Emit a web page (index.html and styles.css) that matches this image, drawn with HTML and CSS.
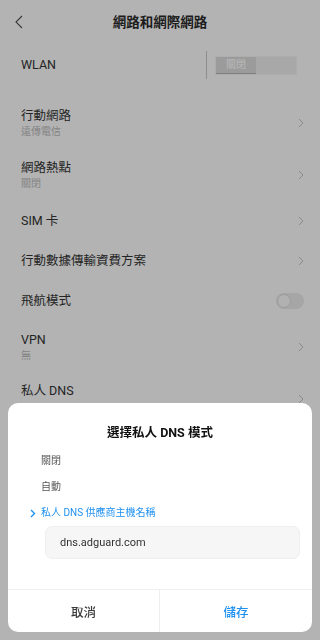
FILE: index.html
```html
<!DOCTYPE html>
<html lang="zh-Hant">
<head>
<meta charset="utf-8">
<title>網路和網際網路</title>
<link rel="stylesheet" href="styles.css">
</head>
<body>
<div class="page">
  <header class="topbar">
    <span class="back">
      <svg width="8" height="14" viewBox="0 0 8 14"><polyline points="7,1 1,7 7,13" fill="none" stroke="#3a3a3a" stroke-width="1.1"/></svg>
    </span>
    <h1 class="title">網路和網際網路</h1>
    <span></span>
  </header>

  <div class="wlan-row">
    <span class="label">WLAN</span>
    <div class="wlan-ctrl">
      <span class="vline"></span>
      <div class="seg-box"><span class="seg-on">關閉</span></div>
    </div>
  </div>

  <ul class="list">
    <li class="row tall">
      <div class="text"><span class="label">行動網路</span><span class="sub">遠傳電信</span></div>
      <svg class="chev" width="6" height="10" viewBox="0 0 6 10"><polyline points="1,1 5,5 1,9" fill="none" stroke="#8a8a8a" stroke-width="1"/></svg>
    </li>
    <li class="row tall">
      <div class="text"><span class="label">網路熱點</span><span class="sub">關閉</span></div>
      <svg class="chev" width="6" height="10" viewBox="0 0 6 10"><polyline points="1,1 5,5 1,9" fill="none" stroke="#8a8a8a" stroke-width="1"/></svg>
    </li>
    <li class="row">
      <div class="text"><span class="label">SIM 卡</span></div>
      <svg class="chev" width="6" height="10" viewBox="0 0 6 10"><polyline points="1,1 5,5 1,9" fill="none" stroke="#8a8a8a" stroke-width="1"/></svg>
    </li>
    <li class="row">
      <div class="text"><span class="label">行動數據傳輸資費方案</span></div>
      <svg class="chev" width="6" height="10" viewBox="0 0 6 10"><polyline points="1,1 5,5 1,9" fill="none" stroke="#8a8a8a" stroke-width="1"/></svg>
    </li>
    <li class="row">
      <div class="text"><span class="label">飛航模式</span></div>
      <span class="switch"><span class="knob"></span></span>
    </li>
    <li class="row tall">
      <div class="text"><span class="label">VPN</span><span class="sub">無</span></div>
      <svg class="chev" width="6" height="10" viewBox="0 0 6 10"><polyline points="1,1 5,5 1,9" fill="none" stroke="#8a8a8a" stroke-width="1"/></svg>
    </li>
    <li class="row tall top">
      <div class="text"><span class="label">私人 DNS</span></div>
      <svg class="chev" width="6" height="10" viewBox="0 0 6 10"><polyline points="1,1 5,5 1,9" fill="none" stroke="#8a8a8a" stroke-width="1"/></svg>
    </li>
  </ul>
</div>

<div class="dialog">
  <h2 class="d-title">選擇私人 DNS 模式</h2>
  <ul class="options">
    <li class="opt">關閉</li>
    <li class="opt">自動</li>
    <li class="opt selected">
      <svg class="opt-chev" width="6" height="9" viewBox="0 0 6 9"><polyline points="1,1 4.5,4.5 1,8" fill="none" stroke="#1e90f0" stroke-width="1.4"/></svg>
      私人 DNS 供應商主機名稱
    </li>
  </ul>
  <div class="input">dns.adguard.com</div>
  <div class="buttons">
    <span class="btn cancel">取消</span>
    <span class="btn save">儲存</span>
  </div>
</div>
</body>
</html>
```

FILE: styles.css
```css
* { box-sizing: border-box; }
html, body { margin: 0; padding: 0; }
body {
  width: 320px;
  height: 640px;
  overflow: hidden;
  background: #b3b3b3;
  font-family: Roboto, "Noto Sans CJK TC", sans-serif;
  color: #242424;
}
.page { width: 320px; }

.topbar {
  height: 44px;
  display: grid;
  grid-template-columns: 44px 1fr 44px;
  align-items: center;
}
.back { padding-left: 15px; display: flex; align-items: center; height: 14px; }
.title {
  margin: 0;
  text-align: center;
  font-size: 13.5px;
  font-weight: 600;
  color: #1c1c1c;
  line-height: 20px;
}

.wlan-row {
  height: 42px;
  padding: 0 23px 0 21px;
  display: flex;
  align-items: center;
  justify-content: space-between;
}
.label { font-size: 12.5px; line-height: 18px; color: #242424; }
.wlan-ctrl { display: flex; align-items: center; gap: 8px; }
.vline { width: 1.5px; height: 28px; background: #8e8e8e; }
.seg-box {
  width: 82px;
  height: 19px;
  background: #a8a8a8;
  border: 1px solid #adadad;
  display: flex;
}
.seg-on {
  width: 40px;
  height: 100%;
  background: #9b9b9b;
  border-bottom: 1px solid #7f7f7f;
  color: #bababa;
  font-size: 10px;
  line-height: 16px;
  text-align: center;
}

.list { list-style: none; margin: 11px 0 0; padding: 0; }
.row {
  height: 40px;
  padding: 0 16px 0 21px;
  display: flex;
  align-items: center;
  justify-content: space-between;
}
.row.tall { height: 52px; }
.row.top .text { align-self: flex-start; padding-top: 9px; }
.text { display: flex; flex-direction: column; }
.sub { font-size: 10px; line-height: 14px; color: #838383; }
.chev { display: block; }

.switch {
  width: 28px;
  height: 16px;
  border-radius: 8px;
  background: #a6a6a6;
  position: relative;
  margin-right: -0px;
}
.knob {
  position: absolute;
  left: 1px;
  top: 1px;
  width: 14px;
  height: 14px;
  border-radius: 50%;
  background: #b1b1b1;
  border: 1px solid #9c9c9c;
}

.dialog {
  position: fixed;
  left: 8px;
  right: 8px;
  bottom: 8px;
  height: 229px;
  background: #ffffff;
  border-radius: 10px;
  overflow: hidden;
  display: flex;
  flex-direction: column;
}
.d-title {
  margin: 0;
  padding-top: 20px;
  text-align: center;
  font-size: 12.5px;
  font-weight: 700;
  line-height: 20px;
  color: #111;
}
.options { list-style: none; margin: 5px 0 0; padding: 0 0 0 33px; }
.opt {
  height: 26px;
  line-height: 26px;
  font-size: 10px;
  color: #555;
  position: relative;
}
.opt.selected { color: #1e90f0; }
.opt-chev { position: absolute; left: -11px; top: 8.5px; }
.input {
  margin: 0 12px 0 37px;
  height: 33px;
  background: #f6f6f6;
  border: 1px solid #efefef;
  border-radius: 7px;
  padding-left: 14px;
  font-size: 11px;
  line-height: 31px;
  color: #333;
}
.buttons {
  margin-top: auto;
  height: 43px;
  border-top: 1px solid #efefef;
  display: grid;
  grid-template-columns: 1fr 1fr;
}
.btn {
  display: flex;
  align-items: center;
  justify-content: center;
  font-size: 12.5px;
  font-weight: 500;
}
.cancel { color: #3a3a3a; border-right: 1px solid #efefef; }
.save { color: #1e90f0; }
```
